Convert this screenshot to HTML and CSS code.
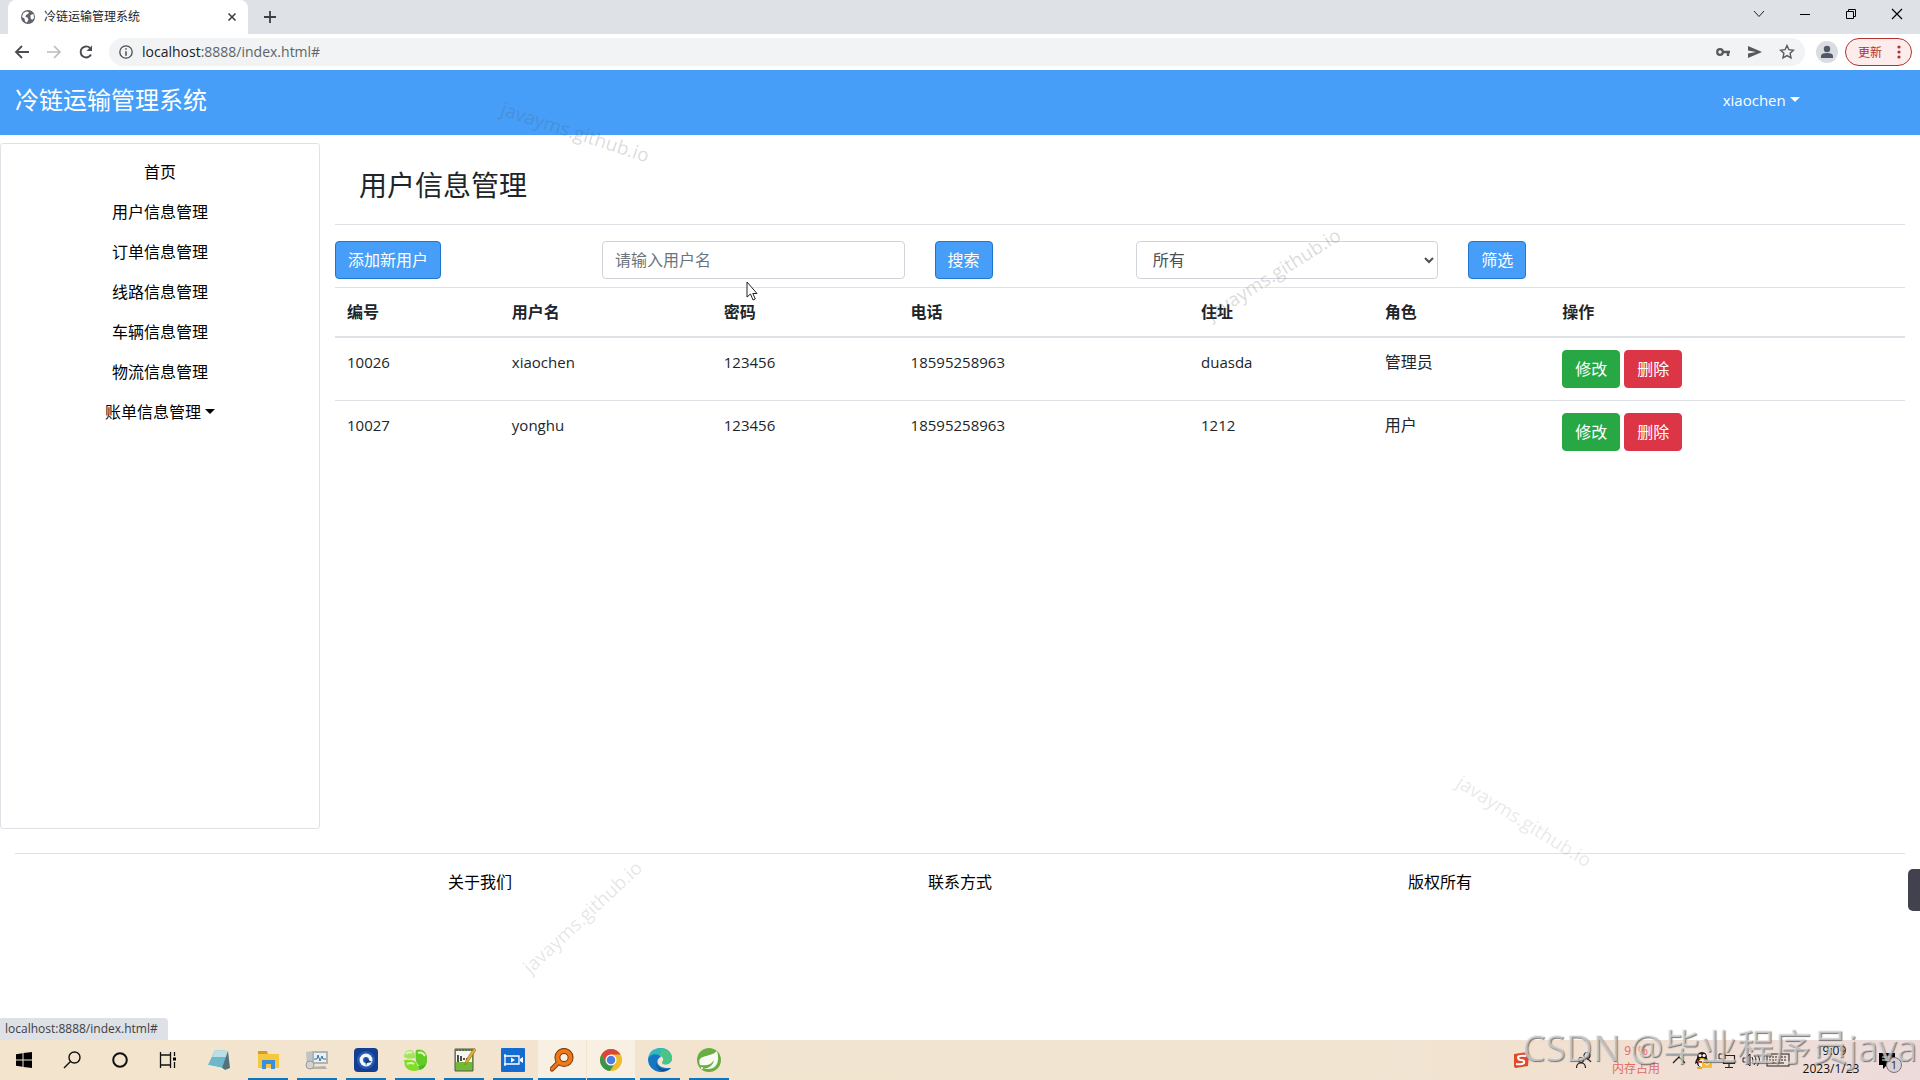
FILE: index.html
```html
<!DOCTYPE html>
<html lang="zh-CN">
<head>
    <meta charset="UTF-8">
    <title>冷链运输管理系统</title>
    <link rel="stylesheet" href="styles.css">
</head>
<body>

<!-- 浏览器标签栏 -->
<div class="tab-bar">
    <div class="tab">
        <svg class="icon-16" viewBox="0 0 16 16"><circle cx="8" cy="8" r="7" fill="#5f6368"/><path d="M3 4.500l3-2 3 .5-1 2-2 1-.5 2 2 .5 1 2-1.500 3-2-1-.5-3L2 8zM10.500 6l3-1 .5 4-2 2-1.500-2z" fill="#fff"/></svg>
        <span class="tab-title">冷链运输管理系统</span>
        <button class="icon-btn" aria-label="关闭标签页"><svg class="icon-16" viewBox="0 0 16 16"><path d="M4.500 4.500l7 7M11.500 4.500l-7 7" stroke="#3c4043" stroke-width="1.600"/></svg></button>
    </div>
    <button class="icon-btn new-tab" aria-label="新标签页"><svg class="icon-16" viewBox="0 0 16 16"><path d="M8 2v12M2 8h12" stroke="#3c4043" stroke-width="1.800"/></svg></button>
    <div class="window-btns">
        <button class="icon-btn" aria-label="搜索标签页"><svg class="icon-16" viewBox="0 0 16 16"><path d="M3 5l5 5.500L13 5" fill="none" stroke="#222"/></svg></button>
        <button class="icon-btn" aria-label="最小化"><svg class="icon-16" viewBox="0 0 16 16"><path d="M3 8.500h10" stroke="#000"/></svg></button>
        <button class="icon-btn" aria-label="还原"><svg class="icon-16" viewBox="0 0 16 16"><path d="M3.500 5.500h7v7h-7zM5.500 5.500v-2h7v7h-2" fill="none" stroke="#000"/></svg></button>
        <button class="icon-btn" aria-label="关闭"><svg class="icon-16" viewBox="0 0 16 16"><path d="M3 3l10 10M13 3L3 13" stroke="#000" stroke-width="1.200"/></svg></button>
    </div>
</div>

<!-- 地址栏 -->
<div class="address-bar">
    <div class="nav-btns">
        <button class="icon-btn" aria-label="后退"><svg class="icon-16" viewBox="0 0 16 16"><path d="M15 8H2M8 2L2 8l6 6" fill="none" stroke="#4a4d51" stroke-width="1.800"/></svg></button>
        <button class="icon-btn" aria-label="前进"><svg class="icon-16" viewBox="0 0 16 16"><path d="M1 8h13M8 2l6 6-6 6" fill="none" stroke="#babcbe" stroke-width="1.600"/></svg></button>
        <button class="icon-btn" aria-label="刷新"><svg class="icon-16" viewBox="0 0 16 16"><path d="M13 10.500A5.500 5.500 0 1 1 12 4" fill="none" stroke="#4a4d51" stroke-width="1.900"/><path d="M14 1.500V7H8.500z" fill="#4a4d51"/></svg></button>
    </div>
    <div class="url-box">
        <svg class="icon-16" viewBox="0 0 16 16"><circle cx="8" cy="8" r="6.200" fill="none" stroke="#4a4d51" stroke-width="1.300"/><path d="M8 4.300v1.500M8 7.200v4.500" stroke="#4a4d51" stroke-width="1.500"/></svg>
        <span class="url"><b>localhost</b>:8888/index.html#</span>
        <div class="url-icons">
            <svg class="icon-16" viewBox="0 0 16 16"><circle cx="5" cy="8" r="2.800" fill="none" stroke="#55585c" stroke-width="2.200"/><path d="M8 8h7M13 8v4" stroke="#55585c" stroke-width="2.400"/></svg>
            <svg class="icon-16" viewBox="0 0 16 16"><path d="M1 2l14 6-14 6V9.500L9 8 1 6.500z" fill="#55585c"/></svg>
            <svg class="icon-16" viewBox="0 0 16 16"><path d="M8 1.500l1.900 4.200 4.600.5-3.400 3.100.9 4.600L8 11.600l-4 2.300.9-4.600L1.500 6.200l4.600-.5z" fill="none" stroke="#55585c" stroke-width="1.400"/></svg>
        </div>
    </div>
    <svg class="avatar" viewBox="0 0 22 22"><circle cx="11" cy="11" r="11" fill="#dadce2"/><circle cx="11" cy="8" r="3.200" fill="#505766"/><path d="M5 17v-2q0-3 6-3t6 3v2z" fill="#505766"/></svg>
    <button class="update-btn">更新<svg class="dots" viewBox="0 0 4 14"><circle cx="2" cy="2" r="1.600" fill="#b3302c"/><circle cx="2" cy="7" r="1.600" fill="#b3302c"/><circle cx="2" cy="12" r="1.600" fill="#b3302c"/></svg></button>
</div>

<!-- 系统页面 -->
<div class="page">
    <div class="header">
        <a class="brand" href="#">冷链运输管理系统</a>
        <div class="header-user"><a class="dropdown en" href="#">xiaochen</a></div>
    </div>

    <div class="container">
        <ul class="sidebar">
            <li><a href="#">首页</a></li>
            <li><a href="#">用户信息管理</a></li>
            <li><a href="#">订单信息管理</a></li>
            <li><a href="#">线路信息管理</a></li>
            <li><a href="#">车辆信息管理</a></li>
            <li><a href="#">物流信息管理</a></li>
            <li><a class="dropdown" href="#">账单信息管理</a></li>
        </ul>

        <div class="content">
            <h3 class="title">用户信息管理</h3>
            <div class="tools">
                <div class="tool-add"><button class="btn btn-primary">添加新用户</button></div>
                <div class="tool-item">
                    <input class="form-control" type="text" placeholder="请输入用户名" aria-label="用户名">
                    <button class="btn btn-primary">搜索</button>
                </div>
                <div class="tool-item">
                    <select class="form-control" aria-label="角色">
                        <option>所有</option>
                        <option>管理员</option>
                        <option>用户</option>
                    </select>
                    <button class="btn btn-primary">筛选</button>
                </div>
            </div>
            <table class="table">
                <thead>
                <tr>
                    <th class="col-id">编号</th>
                    <th class="col-name">用户名</th>
                    <th class="col-pwd">密码</th>
                    <th class="col-tel">电话</th>
                    <th class="col-addr">住址</th>
                    <th class="col-role">角色</th>
                    <th>操作</th>
                </tr>
                </thead>
                <tbody>
                <tr>
                    <td class="en">10026</td>
                    <td class="en">xiaochen</td>
                    <td class="en">123456</td>
                    <td class="en">18595258963</td>
                    <td class="en">duasda</td>
                    <td>管理员</td>
                    <td><div class="actions"><button class="btn btn-success">修改</button><button class="btn btn-danger">删除</button></div></td>
                </tr>
                <tr>
                    <td class="en">10027</td>
                    <td class="en">yonghu</td>
                    <td class="en">123456</td>
                    <td class="en">18595258963</td>
                    <td class="en">1212</td>
                    <td>用户</td>
                    <td><div class="actions"><button class="btn btn-success">修改</button><button class="btn btn-danger">删除</button></div></td>
                </tr>
                </tbody>
            </table>
        </div>
    </div>

    <div class="footer">
        <a href="#">关于我们</a>
        <a href="#">联系方式</a>
        <a href="#">版权所有</a>
    </div>

    <div class="status">localhost:8888/index.html#</div>
    <div class="side-handle"></div>
</div>

<!-- 任务栏 -->
<div class="taskbar">
    <div class="task-sys">
        <svg viewBox="0 0 24 24"><path d="M4 6.200l6.500-1v6.300H4zM11.500 5L20 4v7.500h-8.500zM4 12.500h6.500v6.300l-6.500-1zM11.500 12.500H20V20l-8.500-1z"/></svg>
        <svg viewBox="0 0 24 24"><circle cx="14.500" cy="9.500" r="5.500" fill="none" stroke="#111" stroke-width="1.400"/><path d="M10.500 13.500L4 20" stroke="#111" stroke-width="1.500"/></svg>
        <svg viewBox="0 0 24 24"><circle cx="12" cy="12" r="6.800" fill="none" stroke="#111" stroke-width="2"/></svg>
        <svg viewBox="0 0 24 24"><path d="M4.500 4v3h10V4M4.500 20v-3h10v3M4.500 7v10M14.500 7v10M18.500 4v4M18.500 14v6" fill="none" stroke="#111" stroke-width="1.300"/><path d="M17 9.500h3v3h-3z"/></svg>
    </div>
    <div class="task-apps">
        <div class="task">
            <svg viewBox="0 0 24 24"><path d="M8 2l13 1-5 17L1 17z" fill="#6eb7cb"/><path d="M8 2l13 1-2 6L5 9z" fill="#b9dfe8"/><path d="M21 3l2 17-5 2-3-2z" fill="#52717a"/><path d="M1 17l14 3 3 2-15-3z" fill="#ecebd9"/></svg>
        </div>
        <div class="task open">
            <svg viewBox="0 0 24 24"><path d="M2 3h9l2 3h10v14H2z" fill="#f7c83e"/><path d="M2 3h9v3H2z" fill="#d79a22"/><path d="M6 12h13v9h-4v-5h-5v5H6z" fill="#3d8edb"/></svg>
        </div>
        <div class="task open">
            <svg viewBox="0 0 24 24"><path d="M1 4l6-1v13l-5 4z" fill="#bfc3c4"/><path d="M7 3h16v13H7z" fill="#aeb4b7"/><path d="M9 5h12v9H9z" fill="#e7f0f5"/><path d="M9 11h3l1-4 2 6 2-5 1 3h3" fill="none" stroke="#3d719b"/><path d="M6 19l14-1 2 3H4z" fill="#b3b3ad"/><circle cx="5" cy="17" r="4" fill="#d4d4cd" stroke="#999"/></svg>
        </div>
        <div class="task open">
            <svg viewBox="0 0 24 24"><rect width="24" height="24" rx="4" fill="#143e91"/><circle cx="12" cy="12" r="9" fill="#245bb4"/><circle cx="12" cy="12" r="6.500" fill="#f4f7fb"/><circle cx="12" cy="12" r="3" fill="#235eb5"/><path d="M11 10l7 4-5 1-1 3z" fill="#173d83"/></svg>
        </div>
        <div class="task open">
            <svg viewBox="0 0 24 24"><path d="M1 9Q1 2 8 2q4 1 4 8-6 2-11-1z" fill="#a4e45a"/><path d="M13 2q8-2 11 6 1 7-2 10-7 2-9-5-1-6 0-11z" fill="#62cb27"/><path d="M1 12q6-1 11 1 3 4 4 9-10 3-14-4z" fill="#82dd28"/><path d="M15 18q5 0 8-2-1 5-7 6z" fill="#48b91e"/><path d="M3 6q3-3 6-1M15 5q4-2 7 3M4 16q4-2 7 0" fill="none" stroke="#dcf9b8" stroke-width="2"/></svg>
        </div>
        <div class="task open">
            <svg viewBox="0 0 24 24"><path d="M3 1h18v22H3z" fill="#72b936" stroke="#555"/><path d="M4 3h16v11H4z" fill="#f6f7ef"/><path d="M4 2h16" stroke="#666" stroke-width="2" stroke-dasharray="2 1"/><path d="M6 7v7M9 8v5M11 11h2M14 11h2" stroke="#222" stroke-width="1.600"/><path d="M22 0l2 2-8 12-3 3 1-5z" fill="#e2ae3b" stroke="#8f6a24" stroke-width=".6"/></svg>
        </div>
        <div class="task open">
            <svg viewBox="0 0 24 24"><rect width="24" height="24" rx="1" fill="#146bd1"/><path d="M4 6v12M3 8h15v8H3" fill="none" stroke="#fff" stroke-width="1.300"/><path d="M19 11l3-2v6l-3-2z" fill="#fff"/><path d="M10 9.500l4 2.500-4 2.500z" fill="#fff"/></svg>
        </div>
        <div class="task open active">
            <svg viewBox="0 0 24 24"><path d="M9 14l-7 7" stroke="#7d3a12" stroke-width="5" stroke-linecap="round"/><circle cx="14" cy="9.500" r="6.600" fill="none" stroke="#7d3a12" stroke-width="6"/><circle cx="14" cy="9.500" r="6.600" fill="none" stroke="#ef7918" stroke-width="4"/><path d="M9 14l-7 7" stroke="#ef7918" stroke-width="3" stroke-linecap="round"/></svg>
        </div>
        <div class="task open active">
            <svg viewBox="0 0 24 24"><circle cx="12" cy="12" r="11" fill="#efba2b"/><path d="M2.500 6.500A11 11 0 0 1 21.500 6.500H12L7 15z" fill="#d8463b"/><path d="M2.500 6.500A11 11 0 0 0 11 23l5-8-9 0z" fill="#359650"/><circle cx="12" cy="12" r="5.500" fill="#fff"/><circle cx="12" cy="12" r="4.300" fill="#4d7de0"/></svg>
        </div>
        <div class="task open">
            <svg viewBox="0 0 24 24"><path d="M0 11C1-3 22-4 24 9c1 8-8 9-10 6 4-3 0-8-5-8-5 0-8 3-9 6z" fill="#30b9bd"/><path d="M13 1c8 0 12 7 11 11-2 5-9 5-10 2 3-3 0-6-2-7z" fill="#4bc487"/><path d="M0 11c2-6 11-6 13-2-5 1-7 12 10 11-7 8-23 4-23-9z" fill="#1577c3"/><path d="M8 12c-1 8 8 11 15 8-7 6-16 3-15-8z" fill="#164d97"/></svg>
        </div>
        <div class="task open">
            <svg viewBox="0 0 24 24"><circle cx="12" cy="12" r="12" fill="#6aad43"/><path d="M3 17C-1 6 13 10 20 3c3 10 0 18-9 18H6c7-1 10-4 11-9-3 5-8 6-14 5z" fill="#f8fbf4"/><circle cx="5" cy="20" r="1" fill="#fff"/></svg>
        </div>
    </div>
    <div class="tray">
        <svg class="tray-sogou" viewBox="0 0 18 18"><path d="M2 3l13-2q2 0 2 2l-1 12-12 2q-2 0-2-2z" fill="#e04a2b"/><path d="M14 5q-7-1-8 1 0 3 3 3 4 0 3 3-2 2-8 1" fill="none" stroke="#fff" stroke-width="2"/></svg>
        <svg class="tray-people" viewBox="0 0 18 18"><circle cx="13" cy="4.500" r="3" fill="none" stroke="#222" stroke-width="1.200"/><circle cx="7" cy="9" r="2.500" fill="none" stroke="#222" stroke-width="1.200"/><path d="M2.500 17q0-5 4.500-5t4.500 5M13 8q3 1 4 3" fill="none" stroke="#222" stroke-width="1.200"/></svg>
        <div class="memory"><span>91%</span><span>内存占用</span></div>
        <svg viewBox="0 0 18 18"><path d="M3 12l6-6 6 6" fill="none" stroke="#222" stroke-width="1.300"/></svg>
        <svg viewBox="0 0 18 18"><path d="M8 1q5 0 5 6 2 3 2 6l-2-1q0 4-5 4t-5-4l-2 1q0-3 2-6 0-6 5-6z" fill="#171717"/><ellipse cx="8" cy="12" rx="3.500" ry="4" fill="#fff"/><circle cx="6" cy="4.500" r="1.500" fill="#fff"/><circle cx="10" cy="4.500" r="1.500" fill="#fff"/><path d="M4.500 7h7L8 8.500z" fill="#f2a51c"/><path d="M3 9q5 2 10 0v2q-5 2-10 0z" fill="#d72b2b"/><path d="M3 16h5v2H3z" fill="#f2a51c"/><path d="M8 10h10v7H8z" fill="#f5bd31"/><path d="M8 10l5 4 5-4" fill="none" stroke="#fff2bd"/></svg>
        <svg viewBox="0 0 18 18"><path d="M5.500 4.500h11v8h-11zM11 13v3M7 16.500h8" fill="none" stroke="#222" stroke-width="1.200"/><path d="M1 3h6v5H1z" fill="#eadbd8" stroke="#222"/></svg>
        <svg viewBox="0 0 18 18"><path d="M1 7h3l4-4v12l-4-4H1z" fill="none" stroke="#222"/><path d="M10 6q2 3 0 6M12 4q4 5 0 10M15 3q5 6 0 12" fill="none" stroke="#222"/></svg>
        <svg class="tray-keyboard" viewBox="0 0 24 14"><rect x="1" y="1" width="22" height="12" fill="none" stroke="#222"/><path d="M3 4h18M3 7h18" stroke="#222" stroke-dasharray="2 1"/><path d="M6 10h12" stroke="#222"/></svg>
        <div class="clock"><span>19:09</span><span>2023/1/23</span></div>
        <div class="notice">
            <svg viewBox="0 0 18 18"><path d="M1 2h16v12h-8l-4 4v-4H1z"/><path d="M4 6h10M4 9h10" stroke="#eee"/></svg>
            <span class="badge">1</span>
        </div>
    </div>
</div>

<!-- 水印 -->
<div class="mark mark-1">javayms.github.io</div>
<div class="mark mark-2">javayms.github.io</div>
<div class="mark mark-3">javayms.github.io</div>
<div class="mark mark-4">javayms.github.io</div>
<div class="author-mark">CSDN @毕业程序员java</div>

<svg class="cursor" viewBox="0 0 12 20"><path d="M1 1v15l3.500-3 2.500 6 2.300-1-2.500-5.500H11z" fill="#fff" stroke="#222"/></svg>

</body>
</html>
```
FILE: styles.css
```css
* {
    box-sizing: border-box;
}

body, ul, h3 {
    margin: 0;
    padding: 0;
}

body {
    position: relative;
    display: flex;
    flex-direction: column;
    min-height: 100vh;
    overflow: hidden;
    background: #fff;
    color: #212529;
    font-family: "Open Sans", "Noto Sans CJK SC", sans-serif;
    font-size: 16px;
    line-height: 24px;
}

a {
    color: #000;
    text-decoration: none;
}

button, input, select {
    font-family: inherit;
}

.en {
    font-size: 15px;
}

.icon-16 {
    display: block;
    width: 16px;
    height: 16px;
    flex: none;
}

.icon-btn {
    padding: 0;
    border: 0;
    background: none;
}

/* 标签栏 */
.tab-bar {
    display: flex;
    height: 34px;
    padding-left: 8px;
    background: #dee1e6;
}

.tab {
    display: flex;
    align-items: center;
    width: 240px;
    padding: 0 8px 0 12px;
    border-radius: 8px 8px 0 0;
    background: #fff;
}

.tab-title {
    flex: 1;
    margin-left: 8px;
    font-size: 12px;
}

.new-tab {
    margin-left: 14px;
}

.window-btns {
    display: flex;
    gap: 30px;
    height: 28px;
    margin-left: auto;
    padding-right: 15px;
}

/* 地址栏 */
.address-bar {
    display: flex;
    align-items: center;
    height: 36px;
    padding: 0 8px 0 14px;
    background: #fff;
}

.nav-btns {
    display: flex;
    gap: 16px;
    margin-right: 15px;
}

.url-box {
    display: flex;
    flex: 1;
    align-items: center;
    height: 28px;
    padding: 0 10px 0 9px;
    border-radius: 14px;
    background: #f1f3f4;
}

.url {
    flex: 1;
    margin-left: 8px;
    color: #5f6368;
    font-size: 14px;
}

.url b {
    color: #202124;
    font-weight: normal;
}

.url-icons {
    display: flex;
    gap: 16px;
}

.avatar {
    width: 22px;
    height: 22px;
    margin: 0 7px 0 11px;
}

.update-btn {
    display: flex;
    align-items: center;
    justify-content: space-between;
    width: 67px;
    height: 28px;
    padding: 0 10px 0 12px;
    border: 1px solid #b3302c;
    border-radius: 14px;
    background: #fcedec;
    color: #b3302c;
    font-size: 12px;
}

.dots {
    width: 4px;
    height: 14px;
}

/* 页面 */
.page {
    position: relative;
    flex: 1;
}

.header {
    display: flex;
    align-items: center;
    justify-content: space-between;
    height: 65px;
    padding-left: 15px;
    padding-bottom: 6px;
    background: #469ef9;
}

.header a {
    color: #fff;
}

.brand {
    font-size: 24px;
}

.header-user {
    width: 16.6667%;
    text-align: center;
}

.dropdown::after {
    content: "";
    display: inline-block;
    margin-left: 4px;
    vertical-align: 4px;
    border-top: 5px solid;
    border-left: 5px solid transparent;
    border-right: 5px solid transparent;
}

.container {
    display: flex;
    margin-top: 8px;
}

.sidebar {
    width: 16.6667%;
    min-height: 686px;
    padding-top: 8px;
    border: 1px solid #dee2e6;
    border-radius: 3px;
    text-align: center;
    list-style: none;
}

.sidebar a {
    display: block;
    padding: 8px 16px;
}

.content {
    flex: 1;
    padding: 0 15px;
}

.title {
    padding: 25px 24px 22px;
    border-bottom: 1px solid #dee2e6;
    font-size: 28px;
    font-weight: normal;
    line-height: 34px;
}

.tools {
    display: flex;
    padding: 16px 0 8px;
}

.tool-add {
    width: 17%;
}

.tool-item {
    display: flex;
    gap: 30px;
    width: 34%;
}

.btn {
    height: 38px;
    padding: 0 12px;
    border: 1px solid;
    border-radius: 4px;
    color: #fff;
    font-size: 16px;
    line-height: 24px;
}

.btn-primary {
    border-color: #2277cc;
    background: #469ef9;
}

.btn-success {
    border-color: #28a745;
    background: #28a745;
}

.btn-danger {
    border-color: #dc3545;
    background: #dc3545;
}

.form-control {
    width: 56.7%;
    height: 38px;
    padding: 6px 12px;
    border: 1px solid #ced4da;
    border-radius: 4px;
    background: #fff;
    color: #495057;
    font-size: 16px;
}

.form-control::placeholder {
    color: #6c757d;
}

select.form-control {
    padding-right: 0;
}

.table {
    width: 100%;
    border-collapse: collapse;
    table-layout: fixed;
}

.table th, .table td {
    padding: 12px;
    border-top: 1px solid #dee2e6;
    text-align: left;
    vertical-align: top;
}

.table th {
    border-bottom: 2px solid #dee2e6;
}

.col-id {
    width: 10.5%;
}

.col-name {
    width: 13.5%;
}

.col-pwd {
    width: 11.9%;
}

.col-tel {
    width: 18.5%;
}

.col-addr {
    width: 11.7%;
}

.col-role {
    width: 11.3%;
}

.actions {
    display: flex;
    gap: 4px;
}

.footer {
    display: flex;
    margin: 24px 15px 0;
    padding: 16px 225px;
    border-top: 1px solid #dee2e6;
}

.footer a {
    flex: 1;
    text-align: center;
}

.status {
    position: absolute;
    left: 0;
    bottom: 0;
    padding: 0 10px 0 5px;
    border-radius: 0 4px 0 0;
    background: #dee1e6;
    color: #3c4043;
    font-size: 12px;
    line-height: 22px;
}

.side-handle {
    position: absolute;
    right: 0;
    bottom: 129px;
    width: 12px;
    height: 42px;
    border-radius: 5px 0 0 5px;
    background: #42424f;
}

/* 任务栏 */
.taskbar {
    display: flex;
    height: 40px;
    background: linear-gradient(to right, #f3e4cd, #f1e5d2 70%, #f1e0cf 82%, #eddbdc);
}

.task-sys, .task-apps {
    display: flex;
}

.task-sys svg {
    width: 24px;
    height: 24px;
    margin: 8px 12px;
}

.task-apps {
    gap: 1px;
    margin-left: 3px;
}

.task {
    display: flex;
    align-items: center;
    justify-content: center;
    width: 48px;
}

.task svg {
    width: 24px;
    height: 24px;
}

.open {
    background: linear-gradient(#0f75bd, #0f75bd) center bottom / 40px 2px no-repeat;
}

.active {
    background: linear-gradient(#0f75bd, #0f75bd) center bottom / 48px 2px no-repeat, #f8f0e3;
}

.tray {
    display: flex;
    align-items: center;
    margin-left: auto;
    gap: 6px;
    padding-right: 24px;
    font-size: 12px;
    line-height: 18px;
}

.tray svg {
    width: 18px;
    height: 18px;
}

.tray .tray-people {
    margin: 0 14px 0 38px;
}

.tray .tray-keyboard {
    width: 24px;
    height: 14px;
}

.memory, .clock {
    display: flex;
    flex-direction: column;
    align-items: center;
    color: #111;
}

.memory {
    margin-right: 4px;
    color: #e06a68;
}

.clock {
    width: 70px;
}

.notice {
    position: relative;
    margin-left: 6px;
}

.notice svg {
    display: block;
}

.badge {
    position: absolute;
    left: 8px;
    top: 6px;
    width: 16px;
    height: 16px;
    border: 1px solid #777;
    border-radius: 8px;
    background: #d8d0d0;
    font-size: 11px;
    line-height: 14px;
    text-align: center;
}

/* 水印 */
.mark {
    position: absolute;
    color: rgba(90, 90, 90, .22);
    font-size: 19px;
    pointer-events: none;
}

.mark-1 {
    left: 498px;
    top: 120px;
    transform: rotate(18deg);
}

.mark-2 {
    left: 1196px;
    top: 262px;
    transform: rotate(-32deg);
}

.mark-3 {
    left: 1447px;
    top: 809px;
    color: rgba(90, 90, 90, .14);
    transform: rotate(32deg);
}

.mark-4 {
    left: 505px;
    top: 905px;
    color: rgba(90, 90, 90, .16);
    transform: rotate(-43deg);
}

.author-mark {
    position: absolute;
    right: 3px;
    bottom: 9px;
    color: rgba(240, 240, 240, .6);
    font-size: 37px;
    line-height: 48px;
    text-shadow: 1px 1px 1px rgba(90, 90, 90, .8);
    white-space: nowrap;
    pointer-events: none;
}

.cursor {
    position: absolute;
    left: 746px;
    top: 281px;
    width: 12px;
    height: 20px;
}
```
